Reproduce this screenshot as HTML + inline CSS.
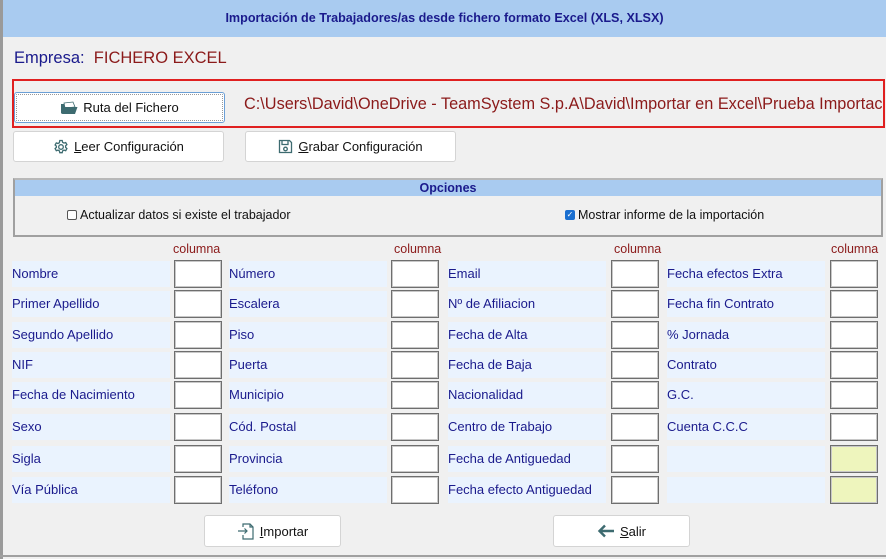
<!DOCTYPE html>
<html><head><meta charset="utf-8"><style>
*{margin:0;padding:0;box-sizing:border-box}
body{width:886px;height:559px;background:#f0f0f0;font-family:"Liberation Sans",sans-serif;position:relative;overflow:hidden;font-size:13px}
.a{position:absolute}
.lbl{position:absolute;background:#eaf3fe;color:#1a1a8c;font-size:13px;height:26px;line-height:26px;padding-left:0;width:158px;white-space:nowrap}
.box{position:absolute;background:#fff;border:1px solid #6e6e6e;box-shadow:inset 0 0 0 1px #c8c8c8;width:48px;height:28px}
.y{background:#eef5bd}
.col{position:absolute;color:#8b1a1a;font-size:12.5px;top:242px}
.btn{position:absolute;background:#fff;border:1px solid #d4d4d4;border-radius:3px;font-size:13px;color:#111;display:flex;align-items:center;justify-content:center;gap:5px}
u{text-decoration:underline}
</style></head><body>
<div class="a" style="left:0;top:0;width:3px;height:559px;background:#9a9a9a"></div>
<div class="a" style="left:0;top:555px;width:886px;height:2px;background:#a0a0a0"></div>
<div class="a" style="left:3px;top:0;width:883px;height:37px;background:#a9cbf0;color:#1a1a8c;font-weight:bold;font-size:12.6px;text-align:center;line-height:37px">Importación de Trabajadores/as desde fichero formato Excel (XLS, XLSX)</div>
<div class="a" style="left:14px;top:49px;font-size:16.5px;color:#1a1a8c">Empresa:&nbsp; <span style="color:#8b1a1a">FICHERO EXCEL</span></div>
<div class="a" style="left:12px;top:79px;width:873px;height:49px;border:2px solid #e02020"></div>
<div class="btn" style="left:14px;top:92px;width:211px;height:31px;border:1px solid #6b9fd6;outline:1px dotted #999;outline-offset:-3px">
<svg width="18" height="14" viewBox="0 0 18 14"><path d="M1 3h5l1.5 1.5H15v8H1z" fill="#3d6b70"/><path d="M4 2l9-1 2 5-10 1z" fill="#fff" stroke="#3d6b70" stroke-width=".8"/><path d="M2 13l2.5-7h13L15 13z" fill="#3d6b70"/></svg>Ruta del Fichero</div>
<div class="a" style="left:244px;top:95px;font-size:16.3px;color:#8b1a1a;white-space:nowrap;width:638px;overflow:hidden">C:\Users\David\OneDrive - TeamSystem S.p.A\David\Importar en Excel\Prueba Importación</div>
<div class="btn" style="left:13px;top:131px;width:211px;height:31px">
<svg width="16" height="16" viewBox="0 0 16 16" fill="none" stroke="#3d6b70" stroke-width="1.3"><circle cx="8" cy="8" r="2.3"/><path d="M6.8 1.5h2.4l.4 1.8 1.4.8 1.7-.6 1.2 2.1-1.3 1.2v1.6l1.3 1.2-1.2 2.1-1.7-.6-1.4.8-.4 1.8H6.8l-.4-1.8-1.4-.8-1.7.6-1.2-2.1 1.3-1.2V7.2L2.1 6l1.2-2.1 1.7.6 1.4-.8z"/></svg><span><u>L</u>eer Configuración</span></div>
<div class="btn" style="left:245px;top:131px;width:211px;height:31px">
<svg width="15" height="15" viewBox="0 0 15 15" fill="none" stroke="#3d6b70" stroke-width="1.3"><path d="M1.5 1.5h10l2 2v10h-12z"/><path d="M4 1.5v4h6v-4"/><circle cx="7.5" cy="10" r="1.8"/></svg><span><u>G</u>rabar Configuración</span></div>
<div class="a" style="left:13px;top:178px;width:870px;height:59px;border:2px solid #a0a0a0;border-top-color:#b8b8b8"></div>
<div class="a" style="left:15px;top:180px;width:866px;height:16px;background:#a9cbf0;color:#1a1a8c;font-weight:bold;text-align:center;line-height:16px;font-size:12.5px">Opciones</div>
<div class="a" style="left:67px;top:208px;font-size:12.5px;color:#111;display:flex;align-items:center;gap:3px"><span style="display:inline-block;width:10px;height:10px;border:1px solid #555;border-radius:2px;background:#fff"></span>Actualizar datos si existe el trabajador</div>
<div class="a" style="left:565px;top:208px;font-size:12.5px;color:#111;display:flex;align-items:center;gap:3px"><span style="display:inline-block;width:10px;height:10px;border-radius:2px;background:#1a6fd0;color:#fff;font-size:8px;line-height:10px;text-align:center">✓</span>Mostrar informe de la importación</div>
<div class="col" style="left:173px">columna</div>
<div class="col" style="left:394px">columna</div>
<div class="col" style="left:614px">columna</div>
<div class="col" style="left:831px">columna</div>
<div id="g"></div>
<div class="btn" style="left:204px;top:515px;width:137px;height:32px">
<svg width="18" height="17" viewBox="0 0 18 17" fill="none" stroke="#3d6b70" stroke-width="1.2"><path d="M6 4V1h7l3 3v12H6v-4"/><path d="M13 1v3h3"/><path d="M1 8h9M7.5 5.5 10 8l-2.5 2.5"/></svg><span><u>I</u>mportar</span></div>
<div class="btn" style="left:553px;top:515px;width:137px;height:32px">
<svg width="18" height="14" viewBox="0 0 18 14" fill="none" stroke="#3d6b70" stroke-width="2.4"><path d="M17 7H3M8 1.5 2.5 7 8 12.5"/></svg><span><u>S</u>alir</span></div>
<script>
var cols=[[12,174,["Nombre","Primer Apellido","Segundo Apellido","NIF","Fecha de Nacimiento","Sexo","Sigla","Vía Pública"]],
[229,391,["Número","Escalera","Piso","Puerta","Municipio","Cód. Postal","Provincia","Teléfono"]],
[448,611,["Email","Nº de Afiliacion","Fecha de Alta","Fecha de Baja","Nacionalidad","Centro de Trabajo","Fecha de Antiguedad","Fecha efecto Antiguedad"]],
[667,830,["Fecha efectos Extra","Fecha fin Contrato","% Jornada","Contrato","G.C.","Cuenta C.C.C","",""]]];
var tops=[261,291,322,352,382,414,446,477];var h="";
cols.forEach(function(c,ci){c[2].forEach(function(t,i){var y=tops[i];
h+='<div class="lbl" style="left:'+c[0]+'px;top:'+y+'px">'+t+'</div>';
h+='<div class="box'+(ci==3&&i>5?' y':'')+'" style="left:'+c[1]+'px;top:'+(y-1)+'px"></div>';});});
document.getElementById("g").innerHTML=h;
</script>
</body></html>
